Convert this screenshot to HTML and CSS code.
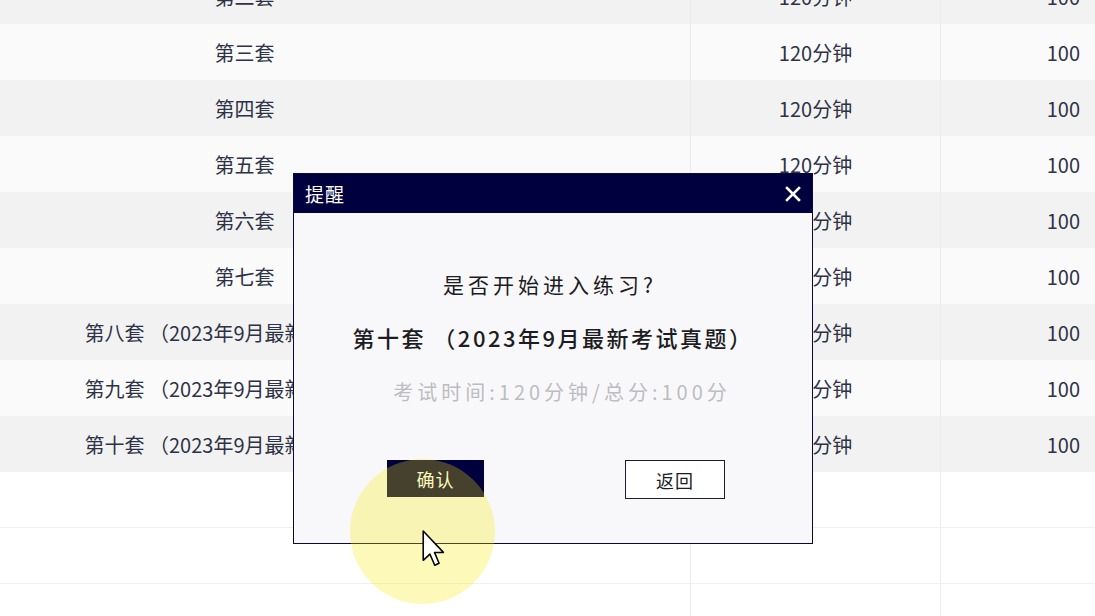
FILE: index.html
```html
<!DOCTYPE html>
<html lang="zh">
<head>
<meta charset="utf-8">
<link rel="stylesheet" href="styles.css">
</head>
<body>
<div class="table">
  <div class="row odd"><div class="c c1">第二套</div><div class="c c2"></div><div class="c c3">120分钟</div><div class="c c4">100</div></div>
  <div class="row even"><div class="c c1">第三套</div><div class="c c2"></div><div class="c c3">120分钟</div><div class="c c4">100</div></div>
  <div class="row odd"><div class="c c1">第四套</div><div class="c c2"></div><div class="c c3">120分钟</div><div class="c c4">100</div></div>
  <div class="row even"><div class="c c1">第五套</div><div class="c c2"></div><div class="c c3">120分钟</div><div class="c c4">100</div></div>
  <div class="row odd"><div class="c c1">第六套</div><div class="c c2"></div><div class="c c3">120分钟</div><div class="c c4">100</div></div>
  <div class="row even"><div class="c c1">第七套</div><div class="c c2"></div><div class="c c3">120分钟</div><div class="c c4">100</div></div>
  <div class="row odd"><div class="c c1">第八套 （2023年9月最新考试真题）</div><div class="c c2"></div><div class="c c3">120分钟</div><div class="c c4">100</div></div>
  <div class="row even"><div class="c c1">第九套 （2023年9月最新考试真题）</div><div class="c c2"></div><div class="c c3">120分钟</div><div class="c c4">100</div></div>
  <div class="row odd"><div class="c c1">第十套 （2023年9月最新考试真题）</div><div class="c c2"></div><div class="c c3">120分钟</div><div class="c c4">100</div></div>
  <div class="row empty"><div class="c c1"></div><div class="c c2"></div><div class="c c3"></div><div class="c c4"></div></div>
  <div class="row empty"><div class="c c1"></div><div class="c c2"></div><div class="c c3"></div><div class="c c4"></div></div>
  <div class="row empty"><div class="c c1"></div><div class="c c2"></div><div class="c c3"></div><div class="c c4"></div></div>
</div>

<div class="ring"></div>

<div class="dialog">
  <div class="dialog-head">
    <span class="dialog-title">提醒</span>
    <svg class="close" width="16" height="16" viewBox="0 0 16 16"><path d="M2 2 L14 14 M14 2 L2 14" stroke="#fff" stroke-width="2.6" stroke-linecap="square"/></svg>
  </div>
  <div class="dialog-body">
    <div class="q">是否开始进入练习?</div>
    <div class="name">第十套 （2023年9月最新考试真题）</div>
    <div class="info">考试时间:120分钟/总分:100分</div>
    <div class="btns">
      <button class="btn ok">确认</button>
      <button class="btn back">返回</button>
    </div>
  </div>
</div>

<div class="highlight"></div>
<svg class="cursor" width="26" height="39" viewBox="0 0 18.5 28"><path d="M1.5 1.5 L1.5 22.5 L6.3 18 L9.8 26 L12.9 24.6 L9.6 16.8 L16 16.8 Z" fill="#fff" stroke="#000" stroke-width="1.1" stroke-linejoin="round"/></svg>
</body>
</html>
```

FILE: styles.css
```css
html, body {
  margin: 0;
  padding: 0;
  background: #ffffff;
  overflow: hidden;
  font-family: "Noto Sans CJK SC", "Noto Sans", sans-serif;
}
.table {
  margin-top: -32px;
  display: flex;
  flex-direction: column;
}
.row {
  display: grid;
  grid-template-columns: 492px 198px 250px 1fr;
  height: 56px;
  color: #2e3247;
  font-size: 20px;
}
.row.odd { background: #f2f2f2; }
.row.even { background: #fafafb; }
.row.empty { background: #ffffff; border-bottom: 1px solid #f0f0f2; height: 55px; }
.c {
  display: flex;
  align-items: center;
  white-space: nowrap;
}
.c1 { justify-content: center; padding-right: 3px; }
.c3 { justify-content: center; border-left: 1px solid #ececee; }
.c4 { justify-content: flex-end; padding-right: 15px; border-left: 1px solid #ececee; }

.ring {
  position: absolute;
  left: 294px;
  top: 372px;
  width: 110px;
  height: 126px;
  border-radius: 50%;
  border: 5px solid rgba(220, 170, 170, 0.08);
}

.dialog {
  position: absolute;
  left: 293px;
  top: 173px;
  width: 518px;
  height: 369px;
  border: 1px solid #0a0a3a;
  background: #f8f8fa;
  display: flex;
  flex-direction: column;
}
.dialog-head {
  height: 39px;
  background: #00003f;
  display: flex;
  align-items: center;
  justify-content: space-between;
  padding: 0 11px 0 11px;
}
.dialog-title {
  color: #ffffff;
  font-size: 19px;
  letter-spacing: 1px;
}
.close { display: block; }
.dialog-body {
  display: flex;
  flex-direction: column;
  align-items: center;
  padding-top: 56px;
}
.q {
  font-size: 21px;
  letter-spacing: 4px;
  color: #1c1c22;
  line-height: 30px;
  padding-right: 6px;
}
.name {
  margin-top: 23px;
  font-size: 22px;
  font-weight: 500;
  letter-spacing: 2.5px;
  color: #1c1c22;
  line-height: 30px;
}
.info {
  margin-top: 25px;
  font-size: 20px;
  letter-spacing: 4px;
  color: #bdbdc1;
  line-height: 30px;
  padding-left: 18px;
}
.btns {
  align-self: stretch;
  display: flex;
  justify-content: space-between;
  align-items: flex-start;
  margin-top: 53px;
  padding: 0 87px 0 93px;
}
.btn {
  font-family: "Noto Sans CJK SC", "Noto Sans", sans-serif;
  font-size: 18px;
  letter-spacing: 1px;
  padding: 0;
  cursor: default;
}
.ok {
  width: 97px;
  height: 37px;
  background: #00003f;
  color: #ffffff;
  border: none;
}
.back {
  width: 100px;
  height: 39px;
  background: #ffffff;
  color: #1c1c22;
  border: 1px solid #1c1c2a;
}

.highlight {
  position: absolute;
  left: 350px;
  top: 459px;
  width: 145px;
  height: 145px;
  border-radius: 50%;
  background: rgba(248, 234, 0, 0.28);
  pointer-events: none;
}
.cursor {
  position: absolute;
  left: 421px;
  top: 529px;
}
```
